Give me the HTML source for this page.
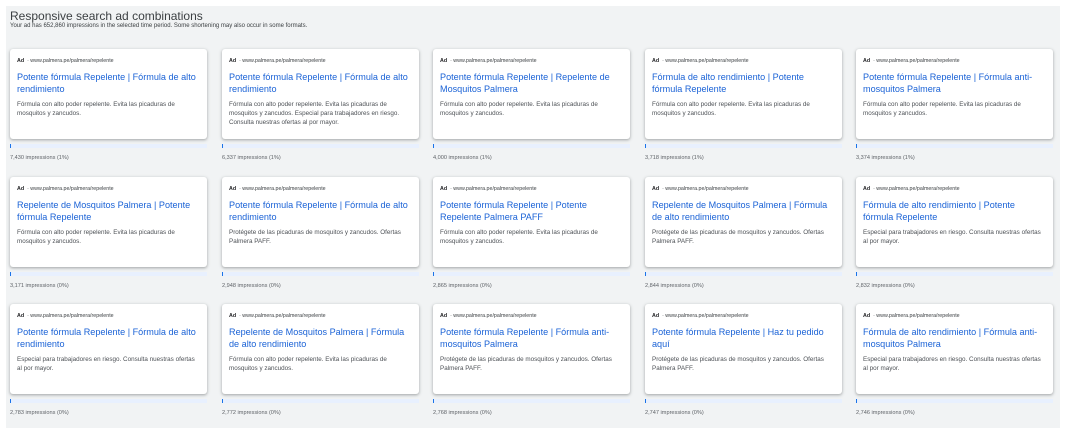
<!DOCTYPE html>
<html><head><meta charset="utf-8"><style>
*{margin:0;padding:0;box-sizing:border-box}
body{width:1069px;height:435px;background:#fff;font-family:"Liberation Sans",Arial,sans-serif;position:relative;overflow:hidden}
.panel{position:absolute;left:6px;top:6px;width:1054px;height:422px;background:#f1f3f4}
h1{position:absolute;left:10px;top:9px;font-size:12px;font-weight:normal;color:#3c4043}
.sub{position:absolute;left:10px;top:23px;font-size:6px;color:#3c4043}
.card{position:absolute;width:197px;height:90px;background:#fff;border-radius:3px;box-shadow:0 1px 2px rgba(60,64,67,.3),0 1px 3px 1px rgba(60,64,67,.12);padding:0 7px}
.url{margin-top:9px;font-size:5.3px;color:#3c4043;white-space:nowrap}
.url b{font-weight:bold;color:#202124;margin-right:3px}
.t{margin-top:7px;font-size:9.1px;line-height:12px;color:#1a62d6}
.d{margin-top:5px;font-size:6.3px;line-height:9.2px;color:#4d5156;padding-right:4px}
.bar{position:absolute;width:197px;height:4px;background:#e8f0fe}
.bar i{position:absolute;left:0;top:0;width:1px;height:4px;background:#1a73e8}
.imp{position:absolute;font-size:5.6px;color:#5f6368}
</style></head><body>
<div class="panel"></div>
<h1>Responsive search ad combinations</h1>
<div class="sub">Your ad has 652,860 impressions in the selected time period. Some shortening may also occur in some formats.</div>
<div id="c"></div>
<script>
var data=[
["Potente fórmula Repelente | Fórmula de alto rendimiento","Fórmula con alto poder repelente. Evita las picaduras de mosquitos y zancudos.","7,430 impressions (1%)"],
["Potente fórmula Repelente | Fórmula de alto rendimiento","Fórmula con alto poder repelente. Evita las picaduras de mosquitos y zancudos. Especial para trabajadores en riesgo. Consulta nuestras ofertas al por mayor.","6,337 impressions (1%)"],
["Potente fórmula Repelente | Repelente de Mosquitos Palmera","Fórmula con alto poder repelente. Evita las picaduras de mosquitos y zancudos.","4,000 impressions (1%)"],
["Fórmula de alto rendimiento | Potente fórmula Repelente","Fórmula con alto poder repelente. Evita las picaduras de mosquitos y zancudos.","3,718 impressions (1%)"],
["Potente fórmula Repelente | Fórmula anti-mosquitos Palmera","Fórmula con alto poder repelente. Evita las picaduras de mosquitos y zancudos.","3,374 impressions (1%)"],
["Repelente de Mosquitos Palmera | Potente fórmula Repelente","Fórmula con alto poder repelente. Evita las picaduras de mosquitos y zancudos.","3,171 impressions (0%)"],
["Potente fórmula Repelente | Fórmula de alto rendimiento","Protégete de las picaduras de mosquitos y zancudos. Ofertas Palmera PAFF.","2,948 impressions (0%)"],
["Potente fórmula Repelente | Potente Repelente Palmera PAFF","Fórmula con alto poder repelente. Evita las picaduras de mosquitos y zancudos.","2,865 impressions (0%)"],
["Repelente de Mosquitos Palmera | Fórmula de alto rendimiento","Protégete de las picaduras de mosquitos y zancudos. Ofertas Palmera PAFF.","2,844 impressions (0%)"],
["Fórmula de alto rendimiento | Potente fórmula Repelente","Especial para trabajadores en riesgo. Consulta nuestras ofertas al por mayor.","2,832 impressions (0%)"],
["Potente fórmula Repelente | Fórmula de alto rendimiento","Especial para trabajadores en riesgo. Consulta nuestras ofertas al por mayor.","2,783 impressions (0%)"],
["Repelente de Mosquitos Palmera | Fórmula de alto rendimiento","Fórmula con alto poder repelente. Evita las picaduras de mosquitos y zancudos.","2,772 impressions (0%)"],
["Potente fórmula Repelente | Fórmula anti-mosquitos Palmera","Protégete de las picaduras de mosquitos y zancudos. Ofertas Palmera PAFF.","2,768 impressions (0%)"],
["Potente fórmula Repelente | Haz tu pedido aquí","Protégete de las picaduras de mosquitos y zancudos. Ofertas Palmera PAFF.","2,747 impressions (0%)"],
["Fórmula de alto rendimiento | Fórmula anti-mosquitos Palmera","Especial para trabajadores en riesgo. Consulta nuestras ofertas al por mayor.","2,746 impressions (0%)"]];
var xs=[10,222,433,645,856],ys=[49,177,304],h="";
data.forEach(function(d,i){var x=xs[i%5],y=ys[Math.floor(i/5)];
h+='<div class="card" style="left:'+x+'px;top:'+y+'px"><div class="url"><b>Ad</b>· www.palmera.pe/palmera/repelente</div><div class="t">'+d[0]+'</div><div class="d">'+d[1]+'</div></div>';
h+='<div class="bar" style="left:'+x+'px;top:'+(y+95)+'px"><i></i></div>';
h+='<div class="imp" style="left:'+x+'px;top:'+(y+106)+'px">'+d[2]+'</div>';});
document.getElementById('c').innerHTML=h;
</script>
</body></html>
